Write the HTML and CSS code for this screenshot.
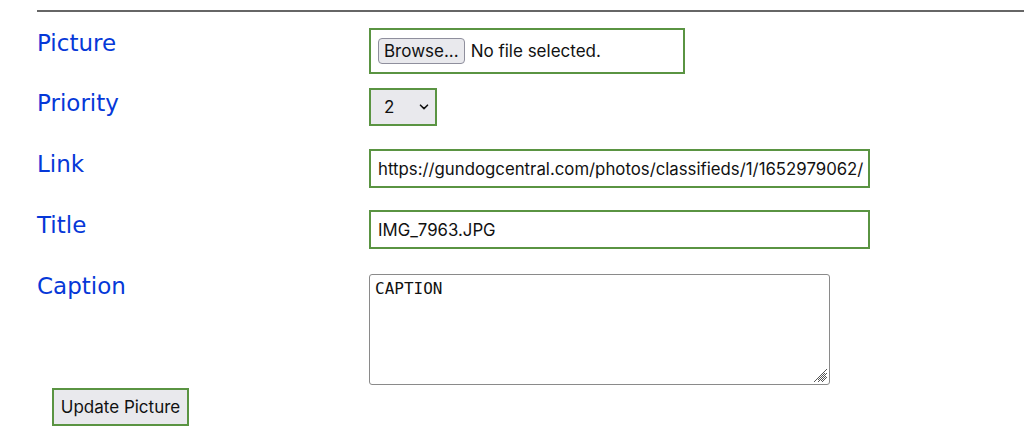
FILE: index.html
```html
<!DOCTYPE html>
<html lang="en">
<head>
<meta charset="utf-8">
<title>Edit Picture</title>
<link rel="stylesheet" href="styles.css">
</head>
<body>
<main class="page">
  <div class="rule"></div>
  <form class="form">
    <label class="label">Picture</label>
    <div class="file">
      <button type="button" class="browse">Browse...</button>
      <span class="file-name">No file selected.</span>
    </div>

    <label class="label">Priority</label>
    <div class="select">
      <span class="select-value">2</span>
      <svg class="chevron" width="10" height="6" viewBox="0 0 10 6"><path d="M1.5 1.2 L5 4.6 L8.5 1.2" fill="none" stroke="#111" stroke-width="1.6" stroke-linecap="round" stroke-linejoin="round"/></svg>
    </div>

    <label class="label">Link</label>
    <input class="text wide" type="text" value="https://gundogcentral.com/photos/classifieds/1/1652979062/">

    <label class="label">Title</label>
    <input class="text wide" type="text" value="IMG_7963.JPG">

    <label class="label label-caption">Caption</label>
    <div class="caption-wrap">
      <textarea class="caption">CAPTION</textarea>
      <svg class="grip" width="16" height="16" viewBox="0 0 16 16">
        <path d="M15 2 L2 15 M15 6 L6 15 M15 10 L10 15 M13 6 L6 13 M14 9 L9 14" stroke="#555" stroke-width="1" fill="none"/>
      </svg>
    </div>
  </form>
  <div class="actions">
    <button type="button" class="submit">Update Picture</button>
  </div>
</main>
</body>
</html>
```
FILE: styles.css
```css
html, body {
  margin: 0;
  padding: 0;
  background: #fff;
}

.page {
  padding: 10px 0 0 37px;
  font-family: Inter, "Liberation Sans", Arial, sans-serif;
}

.rule {
  border-top: 2px solid #666;
  margin-bottom: 16px;
}

.form {
  display: grid;
  grid-template-columns: 332px auto;
  grid-template-rows: 60px 61px 61px 64px auto;
  align-items: start;
  justify-items: start;
}

.label {
  font-family: "DejaVu Sans", Verdana, sans-serif;
  font-size: 23px;
  line-height: 28px;
  color: #0638d8;
  padding-top: 1px;
}

.label-caption {
  margin-top: -3px;
}

.file {
  box-sizing: border-box;
  width: 316px;
  height: 46px;
  border: 2px solid #5a9442;
  display: flex;
  align-items: center;
  gap: 6px;
  padding-left: 7px;
  font-size: 17px;
  color: #111;
}

.browse {
  box-sizing: border-box;
  height: 26px;
  padding: 0 5px;
  font-family: Inter, "Liberation Sans", Arial, sans-serif;
  font-size: 17px;
  color: #111;
  background: #e9e9ed;
  border: 1px solid #8f8f9d;
  border-radius: 4px;
}

.select {
  box-sizing: border-box;
  width: 68px;
  height: 38px;
  border: 2px solid #5a9442;
  background: #e9e9ed;
  display: flex;
  align-items: center;
  justify-content: space-between;
  padding: 0 6px 0 13px;
  font-size: 17px;
  color: #111;
}

.chevron {
  display: block;
}

.text {
  box-sizing: border-box;
  height: 39px;
  border: 2px solid #5a9442;
  padding: 0 0 0 7px;
  font-family: Inter, "Liberation Sans", Arial, sans-serif;
  font-size: 16.8px;
  color: #111;
  background: #fff;
  outline: none;
}

.wide {
  width: 501px;
}

.caption-wrap {
  position: relative;
  width: 461px;
  height: 111px;
}

.caption {
  display: block;
  box-sizing: border-box;
  width: 461px;
  height: 111px;
  border: 1px solid #8a8a8a;
  border-radius: 3px;
  padding: 4px 5px;
  font-family: "DejaVu Sans Mono", monospace;
  font-size: 16px;
  line-height: 20px;
  color: #111;
  resize: none;
  margin: 0;
}

.grip {
  position: absolute;
  right: 2px;
  bottom: 2px;
  display: block;
}

.actions {
  padding: 3px 0 0 15px;
}

.submit {
  box-sizing: border-box;
  height: 38px;
  width: 137px;
  padding: 0;
  font-family: Inter, "Liberation Sans", Arial, sans-serif;
  font-size: 17px;
  color: #111;
  background: #e9e9ed;
  border: 2px solid #5a9442;
}
```
